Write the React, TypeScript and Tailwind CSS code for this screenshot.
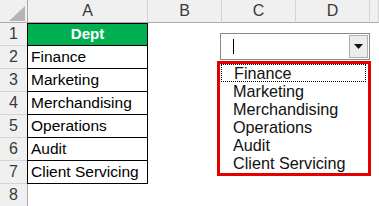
import React from "react";

const depts = ["Finance", "Marketing", "Merchandising", "Operations", "Audit", "Client Servicing"];
const cols = ["A", "B", "C", "D", ""];

export default function App() {
  const rows = [1, 2, 3, 4, 5, 6, 7, 8];
  return (
    <div className="relative w-[379px] h-[206px] overflow-hidden bg-white font-['Liberation_Sans',Arial,sans-serif] text-[#222]">
      <div className="grid grid-cols-[28px_120px_74px_74px_74px_1fr] grid-rows-[23px_repeat(8,23px)]">
        {/* corner */}
        <div className="relative bg-[#f0f0f0] border-r border-b border-[#ababab]">
          <svg className="absolute left-[9px] top-[6px]" width="16" height="15" viewBox="0 0 16 15">
            <polygon points="16,0 16,15 0,15" fill="#b5b5b5" />
          </svg>
        </div>
        {cols.map((c, i) => (
          <div
            key={"h" + i}
            className="flex items-center justify-center bg-[#f0f0f0] border-r border-r-[#d4d4d4] border-b border-b-[#ababab] text-[16px] text-[#3a3a3a]"
          >
            {c}
          </div>
        ))}
        {rows.map((r) => (
          <React.Fragment key={r}>
            <div className="flex items-center justify-center bg-[#f0f0f0] border-r border-r-[#ababab] border-b border-b-[#d4d4d4] text-[16px] text-[#3a3a3a]">
              {r}
            </div>
            {r === 1 ? (
              <div className="flex items-center justify-center bg-[#00b050] border border-black -ml-px text-white font-bold text-[15px]">
                Dept
              </div>
            ) : r <= 7 ? (
              <div className="flex items-center pl-[3px] border-x border-b border-black -ml-px text-[15.5px] text-black whitespace-nowrap">
                {depts[r - 2]}
              </div>
            ) : (
              <div />
            )}
            <div />
            <div />
            <div />
            <div />
          </React.Fragment>
        ))}
      </div>

      {/* combo box */}
      <div className="absolute left-[220px] top-[33px] w-[150px] h-[27px] border border-[#8a8a8a] bg-white">
        <div className="absolute left-[12px] top-[5px] w-px h-[15px] bg-black" />
        <div className="absolute right-px top-px w-[19px] h-[23px] bg-[#ececec] border border-[#b0b0b0] flex items-center justify-center">
          <svg width="9" height="5" viewBox="0 0 9 5">
            <polygon points="0,0 9,0 4.5,5" fill="#111" />
          </svg>
        </div>
      </div>

      {/* dropdown list */}
      <div className="absolute left-[217px] top-[61px] w-[154px] h-[115px] border-[3px] border-[#e50000] bg-white overflow-hidden">
        <div className="flex flex-col text-[16.2px] leading-[18px] text-[#111]">
          {depts.map((d, i) => (
            <div
              key={d}
              className={
                "h-[18px] pl-[12px] ml-px mr-[2px] whitespace-nowrap " +
                (i === 0 ? "border border-dotted border-black pl-[11px] leading-[17px]" : "")
              }
            >
              {d}
            </div>
          ))}
        </div>
      </div>
    </div>
  );
}
